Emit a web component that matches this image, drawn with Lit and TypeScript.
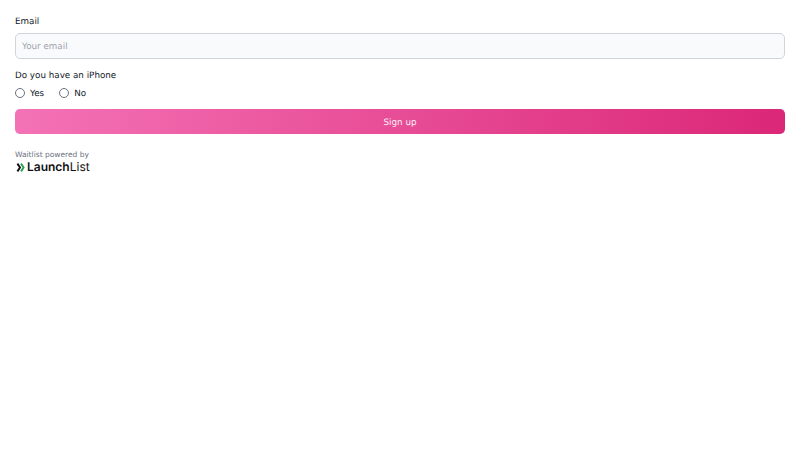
import { LitElement, html, css } from "lit";
import { customElement } from "lit/decorators.js";

@customElement("app-root")
export class AppRoot extends LitElement {
  static styles = css`
    :host {
      display: block;
      background: #fff;
      min-height: 450px;
      font-family: "DejaVu Sans", sans-serif;
      color: #111827;
      text-rendering: geometricPrecision;
    }
    .form {
      display: flex;
      flex-direction: column;
      padding: 15px 15px 0;
    }
    .label {
      font-size: 8.75px;
      line-height: 15px;
    }
    .input {
      box-sizing: border-box;
      height: 26px;
      margin-top: 3px;
      padding: 2px 6px 0;
      display: flex;
      align-items: center;
      background: #f9fafb;
      border: 1px solid #d1d5db;
      border-radius: 5px;
      font-size: 8.75px;
      color: #9ca3af;
    }
    .question {
      margin-top: 10px;
    }
    .radios {
      display: flex;
      gap: 15px;
      height: 13px;
      margin-top: 2.5px;
      font-size: 8.75px;
      line-height: 13px;
    }
    .radio {
      display: flex;
      align-items: center;
      gap: 5px;
    }
    .radio span {
      padding-top: 3px;
    }
    .dot {
      box-sizing: border-box;
      width: 10px;
      height: 10px;
      border: 1px solid #6b7280;
      border-radius: 50%;
      background: #fff;
    }
    .button {
      box-sizing: border-box;
      height: 25px;
      margin-top: 9.5px;
      padding-top: 2px;
      display: flex;
      align-items: center;
      justify-content: center;
      border-radius: 5px;
      background: linear-gradient(to right, #f472b6, #db2777);
      color: #fdf2f8;
      font-size: 8.75px;
    }
    .powered {
      margin-top: 15px;
      font-size: 7.5px;
      line-height: 11px;
      color: #6b7280;
    }
    .logo {
      display: flex;
      align-items: center;
      gap: 2px;
      font-family: "Inter", sans-serif;
      font-size: 12px;
      line-height: 14px;
      color: #111;
    }
    .logo b {
      font-weight: 600;
    }
    .logo span {
      font-weight: 400;
    }
    svg {
      display: block;
    }
  `;

  render() {
    return html`
      <div class="form">
        <div class="label">Email</div>
        <div class="input">Your email</div>
        <div class="label question">Do you have an iPhone</div>
        <div class="radios">
          <div class="radio"><div class="dot"></div><span>Yes</span></div>
          <div class="radio"><div class="dot"></div><span>No</span></div>
        </div>
        <div class="button">Sign up</div>
        <div class="powered">Waitlist powered by</div>
        <div class="logo">
          <svg width="10" height="9" viewBox="0 0 10 9" fill="none" stroke-width="1.9">
            <path d="M6 0.6 L8.6 4.5 L6 8.4" stroke="#22a35a"></path>
            <path d="M2.4 0.6 L5 4.5 L2.4 8.4" stroke="#111"></path>
          </svg>
          <div><b>Launch</b><span>List</span></div>
        </div>
      </div>
    `;
  }
}
